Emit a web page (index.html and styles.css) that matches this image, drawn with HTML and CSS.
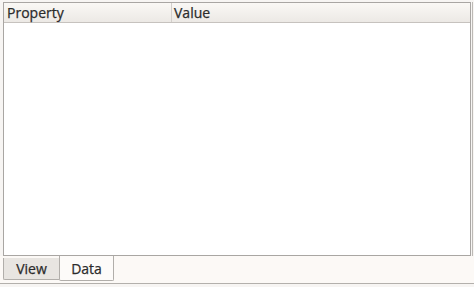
FILE: index.html
```html
<!DOCTYPE html>
<html>
<head>
<meta charset="utf-8">
<link rel="stylesheet" href="styles.css">
</head>
<body>
<div class="window">
  <div class="pane">
    <div class="table">
      <div class="header">
        <div class="col prop">Property</div>
        <div class="col val">Value</div>
      </div>
      <div class="body"></div>
    </div>
  </div>
  <div class="tabbar">
    <div class="tab">View</div>
    <div class="tab selected">Data</div>
  </div>
</div>
</body>
</html>
```
FILE: styles.css
```css
html, body {
  margin: 0;
  padding: 0;
  background: #f7f5f3;
}
.window {
  width: 474px;
  height: 287px;
  box-sizing: border-box;
  padding: 2px 1px 0 3px;
  display: flex;
  flex-direction: column;
  font-family: "Open Sans", "Noto Sans", sans-serif;
  font-size: 14px;
  color: #2b2b2b;
  background: #f7f5f3;
}
.pane {
  display: flex;
  height: 254px;
  padding-right: 1px;
  border-right: 1px solid #bcb9b5;
}
.table {
  flex: 1;
  display: flex;
  flex-direction: column;
  border: 1px solid #a9a6a3;
  background: #ffffff;
}
.header {
  display: flex;
  height: 19px;
  border-bottom: 1px solid #c6c2be;
  background: linear-gradient(#faf8f5, #ece9e5);
}
.col {
  line-height: 20px;
  white-space: nowrap;
  -webkit-text-stroke: 0.25px #2b2b2b;
}
.prop {
  width: 164px;
  padding-left: 3px;
  border-right: 1px solid #d3cfcb;
}
.val {
  flex: 1;
  padding-left: 2px;
}
.body {
  flex: 1;
}
.tabbar {
  display: flex;
  align-items: flex-start;
  height: 27px;
  border-bottom: 1px solid #b3b0ac;
  background: #fcf9f6;
  margin-right: -1px;
  margin-left: -3px;
  padding-left: 3px;
}
.tab {
  box-sizing: border-box;
  text-align: center;
  -webkit-text-stroke: 0.25px #2b2b2b;
}
.tab:first-child {
  width: 56px;
  height: 22px;
  margin-top: 2px;
  line-height: 21px;
  background: #e8e5e1;
  border: 1px solid #b1aeaa;
  border-top: none;
  border-right: none;
  border-radius: 0 0 0 2px;
}
.tab.selected {
  width: 55px;
  height: 25px;
  line-height: 25px;
  background: #fdfbf9;
  border: 1px solid #b1aeaa;
  border-top: none;
  border-radius: 0 0 2px 2px;
}
```
